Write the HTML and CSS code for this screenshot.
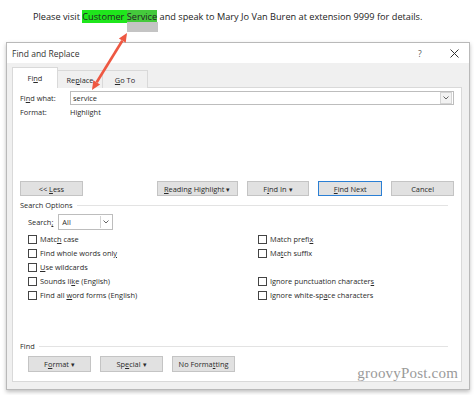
FILE: index.html
```html
<!DOCTYPE html>
<html lang="en">
<head>
    <meta charset="UTF-8">
    <title>Find and Replace</title>
    <link rel="stylesheet" href="styles.css">
</head>
<body>
    <div class="sentence">
        Please visit <span class="hl">Customer <span class="hl-sel">Service</span></span> and speak to Mary Jo Van Buren at extension 9999 for details.
        <div class="tip-box"></div>
    </div>

    <div class="dialog">
        <div class="titlebar">
            <span class="title">Find and Replace</span>
            <span class="help">?</span>
            <svg class="close" width="9" height="9" viewBox="0 0 9 9"><path d="M0.5 0.5 L8.5 8.5 M8.5 0.5 L0.5 8.5" stroke="#333" stroke-width="1"/></svg>
        </div>
        <div class="dialog-body">
            <div class="tabs">
                <div class="tab active"><span>Fi<u>n</u>d</span></div>
                <div class="tab"><span>Re<u>p</u>lace</span></div>
                <div class="tab"><span><u>G</u>o To</span></div>
            </div>
            <div class="panel">
                <div class="find-row">
                    <label class="field-label">Fi<u>n</u>d what:</label>
                    <div class="combo">
                        <span>service</span>
                        <span class="combo-arrow"><svg width="6" height="4" viewBox="0 0 6 4"><path d="M0.5 0.5 L3 3 L5.5 0.5" fill="none" stroke="#666"/></svg></span>
                    </div>
                </div>
                <div class="format-row">
                    <span class="field-label">Format:</span>
                    <span>Highlight</span>
                </div>

                <div class="main-buttons">
                    <button class="btn btn-less">&lt;&lt; <u>L</u>ess</button>
                    <button class="btn btn-wide"><u>R</u>eading Highlight ▾</button>
                    <button class="btn">F<u>i</u>nd In ▾</button>
                    <button class="btn btn-default"><u>F</u>ind Next</button>
                    <button class="btn">Cancel</button>
                </div>

                <div class="legend legend-options"><span>Search Options</span></div>

                <div class="search-row">
                    <span>Search<u>;</u></span>
                    <div class="select">
                        <span>All</span>
                        <span class="select-arrow"><svg width="6" height="4" viewBox="0 0 6 4"><path d="M0.5 0.5 L3 3 L5.5 0.5" fill="none" stroke="#666"/></svg></span>
                    </div>
                </div>

                <div class="options">
                    <label class="opt"><span class="box"></span><span>Matc<u>h</u> case</span></label>
                    <label class="opt"><span class="box"></span><span>Match prefi<u>x</u></span></label>
                    <label class="opt"><span class="box"></span><span>Find whole words onl<u>y</u></span></label>
                    <label class="opt"><span class="box"></span><span>Ma<u>t</u>ch suffix</span></label>
                    <label class="opt"><span class="box"></span><span><u>U</u>se wildcards</span></label>
                    <span></span>
                    <label class="opt"><span class="box"></span><span>Sounds li<u>k</u>e (English)</span></label>
                    <label class="opt"><span class="box"></span><span>Ignore punctuation character<u>s</u></span></label>
                    <label class="opt"><span class="box"></span><span>Find all <u>w</u>ord forms (English)</span></label>
                    <label class="opt"><span class="box"></span><span>Ignore white-sp<u>a</u>ce characters</span></label>
                </div>

                <div class="legend legend-find"><span>Find</span></div>

                <div class="bottom-buttons">
                    <button class="btn">F<u>o</u>rmat ▾</button>
                    <button class="btn">Sp<u>e</u>cial ▾</button>
                    <button class="btn">No Forma<u>t</u>ting</button>
                    <span class="watermark">groovyPost.com</span>
                </div>
            </div>
        </div>
    </div>

    <svg class="arrow" width="474" height="395" viewBox="0 0 474 395">
        <line x1="122.3" y1="40.7" x2="96.7" y2="82.3" stroke="#ee5842" stroke-width="2.6"/>
        <polygon points="127,33 125.7,42.8 118.9,38.6" fill="#ee5842"/>
        <polygon points="92,90 100.1,84.4 93.3,80.2" fill="#ee5842"/>
    </svg>
</body>
</html>
```

FILE: styles.css
```css
body {
    margin: 0;
    width: 474px;
    height: 395px;
    background: #fff;
    font-family: "Open Sans", "Noto Sans", sans-serif;
    color: #2a2a2a;
    position: relative;
    overflow: hidden;
}
u {
    text-decoration: underline;
    text-underline-offset: 1px;
}
.sentence {
    position: relative;
    height: 42px;
    box-sizing: border-box;
    padding: 11px 0 0 33px;
    font-size: 9.2px;
    line-height: 11px;
    color: #222;
    white-space: nowrap;
}
.hl {
    background: #1fe61c;
}
.hl-sel {
    background: #45c93c;
}
.tip-box {
    position: absolute;
    left: 127px;
    top: 22px;
    width: 31px;
    height: 10px;
    background: #c4c4c4;
}
.dialog {
    margin-left: 6px;
    width: 464px;
    height: 348px;
    box-sizing: border-box;
    border: 1px solid #b9b9b9;
    box-shadow: 0 2px 4px rgba(0, 0, 0, 0.25);
    background: #f0f0f0;
    display: flex;
    flex-direction: column;
}
.titlebar {
    height: 20px;
    background: #fff;
    display: flex;
    align-items: center;
    padding-left: 5px;
    font-size: 8.5px;
    color: #333;
}
.title {
    flex: 1;
}
.help {
    width: 10px;
    margin-right: 22px;
    font-size: 8.5px;
    color: #555;
}
.close {
    margin-right: 10px;
}
.dialog-body {
    flex: 1;
    padding: 5px 7px 7px 5px;
    display: flex;
    flex-direction: column;
    font-size: 7.4px;
}
.tabs {
    display: flex;
    align-items: flex-end;
    height: 20px;
    margin-bottom: -1px;
    position: relative;
    z-index: 1;
}
.tab {
    height: 18px;
    box-sizing: border-box;
    border: 1px solid #d9d9d9;
    border-bottom: none;
    border-left: none;
    background: #f0f0f0;
    display: flex;
    align-items: center;
    justify-content: center;
    width: 45px;
}
.tab.active {
    height: 21px;
    width: 46px;
    background: #fff;
    border-left: 1px solid #d9d9d9;
}
.panel {
    flex: 1;
    background: #fff;
    border: 1px solid #d9d9d9;
    padding: 0 7px 0 7px;
    display: flex;
    flex-direction: column;
}
.find-row {
    margin-top: 3px;
    height: 14px;
    display: flex;
    align-items: center;
}
.field-label {
    width: 50px;
}
.combo {
    width: 384px;
    height: 14px;
    box-sizing: border-box;
    border: 1px solid #bdbdbd;
    display: flex;
    align-items: center;
    padding-left: 2px;
}
.combo span:first-child {
    flex: 1;
}
.combo-arrow,
.select-arrow {
    width: 10px;
    height: 10px;
    margin-right: 1px;
    border: 1px solid #d4d4d4;
    background: #f2f2f2;
    display: flex;
    align-items: center;
    justify-content: center;
}
.format-row {
    margin-top: 2px;
    height: 10px;
    display: flex;
    align-items: center;
}
.main-buttons {
    margin-top: 64px;
    display: flex;
    gap: 9px;
}
.btn {
    font-family: inherit;
    font-size: 7.4px;
    color: #2a2a2a;
    width: 63px;
    height: 15px;
    padding: 0;
    background: #e1e1e1;
    border: 1px solid #c4c4c4;
    border-radius: 0;
}
.btn-less {
    margin-right: 65px;
}
.btn-wide {
    width: 81px;
}
.btn-default {
    width: 64px;
    border: 1px solid #2b7fd4;
}
.legend {
    height: 10px;
    display: flex;
    align-items: center;
    gap: 4px;
    margin-right: 6px;
}
.legend::after {
    content: "";
    flex: 1;
    border-top: 1px solid #e3e3e3;
}
.legend-options {
    margin-top: 4px;
}
.search-row {
    margin-top: 4px;
    padding-left: 8px;
    height: 16px;
    display: flex;
    align-items: center;
    gap: 5px;
}
.select {
    width: 55px;
    height: 16px;
    box-sizing: border-box;
    border: 1px solid #bdbdbd;
    display: flex;
    align-items: center;
    padding-left: 3px;
}
.select span:first-child {
    flex: 1;
}
.select-arrow {
    height: 12px;
    border: none;
    border-left: 1px solid #d4d4d4;
    background: #fff;
}
.options {
    margin-top: 2px;
    padding-left: 8px;
    display: grid;
    grid-template-columns: 230px 1fr;
    grid-auto-rows: 14px;
}
.opt {
    display: flex;
    align-items: center;
    gap: 3px;
}
.box {
    width: 9px;
    height: 9px;
    box-sizing: border-box;
    border: 1px solid #444;
    background: #fff;
}
.legend-find {
    margin-top: 39px;
}
.bottom-buttons {
    margin-top: 5px;
    padding-left: 8px;
    display: flex;
    gap: 9px;
    position: relative;
}
.bottom-buttons .btn {
    height: 16px;
}
.watermark {
    position: absolute;
    right: -4px;
    top: 9px;
    font-family: "Liberation Serif", "DejaVu Serif", serif;
    font-size: 15px;
    color: #9a9a9a;
    letter-spacing: 0.2px;
}
.arrow {
    position: absolute;
    top: 0;
    left: 0;
    z-index: 5;
    pointer-events: none;
}
```
